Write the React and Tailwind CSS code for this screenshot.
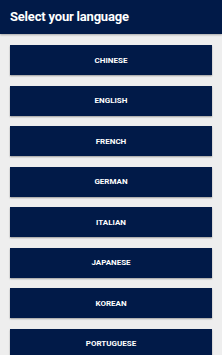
import React from "react";

const langs = ["CHINESE","ENGLISH","FRENCH","GERMAN","ITALIAN","JAPANESE","KOREAN","PORTUGUESE"];

export default function App() {
  return (
    <div className="w-[222px] h-[355px] overflow-hidden bg-[#eeeeee]" style={{fontFamily: "Roboto, 'Liberation Sans', sans-serif"}}>
      <div className="h-[34px] bg-[#011a48] flex items-center px-[10px] shadow-[0_1px_2px_rgba(0,0,0,0.3)]">
        <span className="text-white text-[13px] font-bold tracking-[-0.2px]">Select your language</span>
      </div>
      <div className="flex flex-col gap-[10.5px] px-[10px] pt-[11px]">
        {langs.map((l) => (
          <div key={l} className="h-[30px] shrink-0 bg-[#011a48] flex items-center justify-center shadow-[0_1px_1.5px_rgba(0,0,0,0.35)]">
            <span className="text-white text-[8px] font-bold pt-[1px]">{l}</span>
          </div>
        ))}
      </div>
    </div>
  );
}
